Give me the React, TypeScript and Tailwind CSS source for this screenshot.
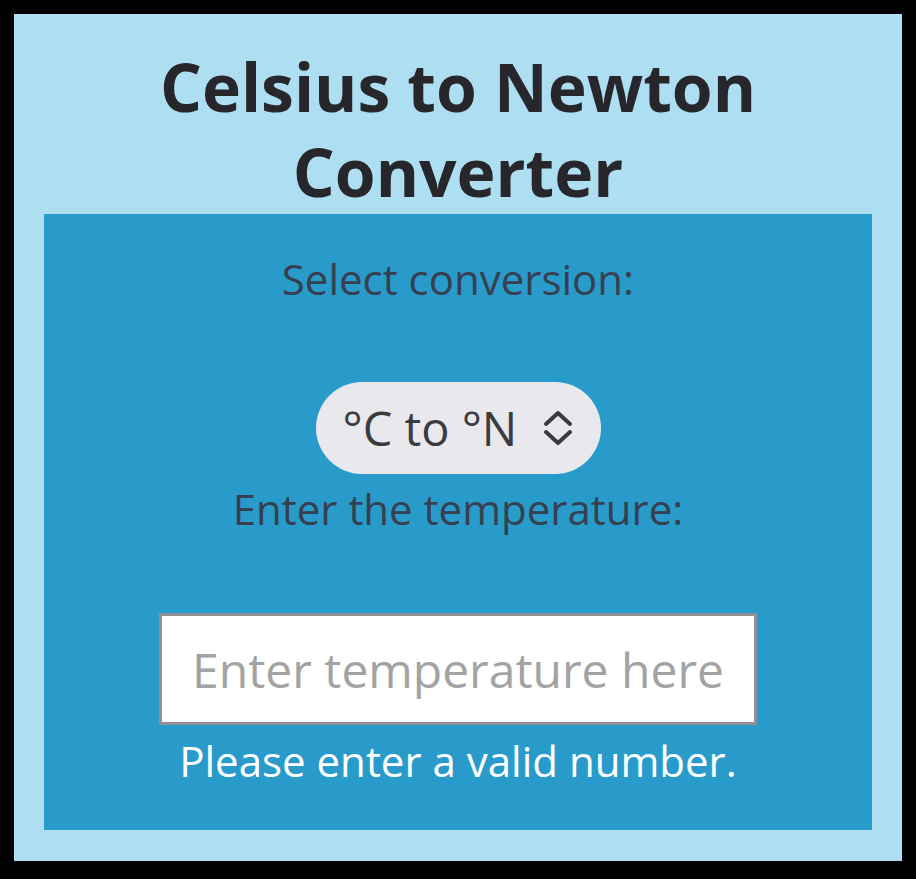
import { useState } from 'react'

const ChevronsUpDown = () => (
    <svg width="32" height="36" viewBox="0 0 32 36" fill="none" stroke="#3b3b40" strokeWidth="4" strokeLinecap="round" strokeLinejoin="round">
        <path d="M4 14 L16 3 L28 14" />
        <path d="M4 22 L16 33 L28 22" />
    </svg>
)

const App = () => {
    const [mode, setMode] = useState('c2n')
    const [value, setValue] = useState('')

    return (
        <div className="w-[916px] h-[879px] bg-black pt-[14px] px-[14px] font-['Open_Sans',sans-serif]">
            <div className="h-[847px] bg-[#addef2] px-[30px] pt-[30px] pb-[31px] flex flex-col">
                <h1 className="text-center text-[66px] leading-[85px] font-bold text-[#27272b]">
                    Celsius to Newton
                    <br />
                    Converter
                </h1>
                <div className="flex-1 bg-[#299bcb] flex flex-col items-center pt-[36px]">
                    <label className="text-[42px] leading-[58px] text-[#36404f]">Select conversion:</label>
                    <div className="relative mt-[74px]">
                        <select
                            value={mode}
                            onChange={(e) => setMode(e.target.value)}
                            className="appearance-none w-[285px] h-[92px] rounded-full bg-[#e9e9ed] pl-[27px] pr-[70px] text-[47px] text-[#3b3b40] outline-none"
                        >
                            <option value="c2n">°C to °N</option>
                            <option value="n2c">°N to °C</option>
                        </select>
                        <span className="absolute right-[27px] top-[28px] pointer-events-none">
                            <ChevronsUpDown />
                        </span>
                    </div>
                    <label className="mt-[6px] text-[42px] leading-[58px] text-[#36404f]">Enter the temperature:</label>
                    <input
                        type="text"
                        value={value}
                        onChange={(e) => setValue(e.target.value)}
                        placeholder="Enter temperature here"
                        className="mt-[75px] w-[598px] h-[112px] bg-white border-[3px] border-[#8f8f95] text-center text-[48px] text-[#222] placeholder:text-[#a3a3a3] outline-none"
                    />
                    <p className="mt-[8px] text-[42px] leading-[56px] text-white">Please enter a valid number.</p>
                </div>
            </div>
        </div>
    )
}

export default App
